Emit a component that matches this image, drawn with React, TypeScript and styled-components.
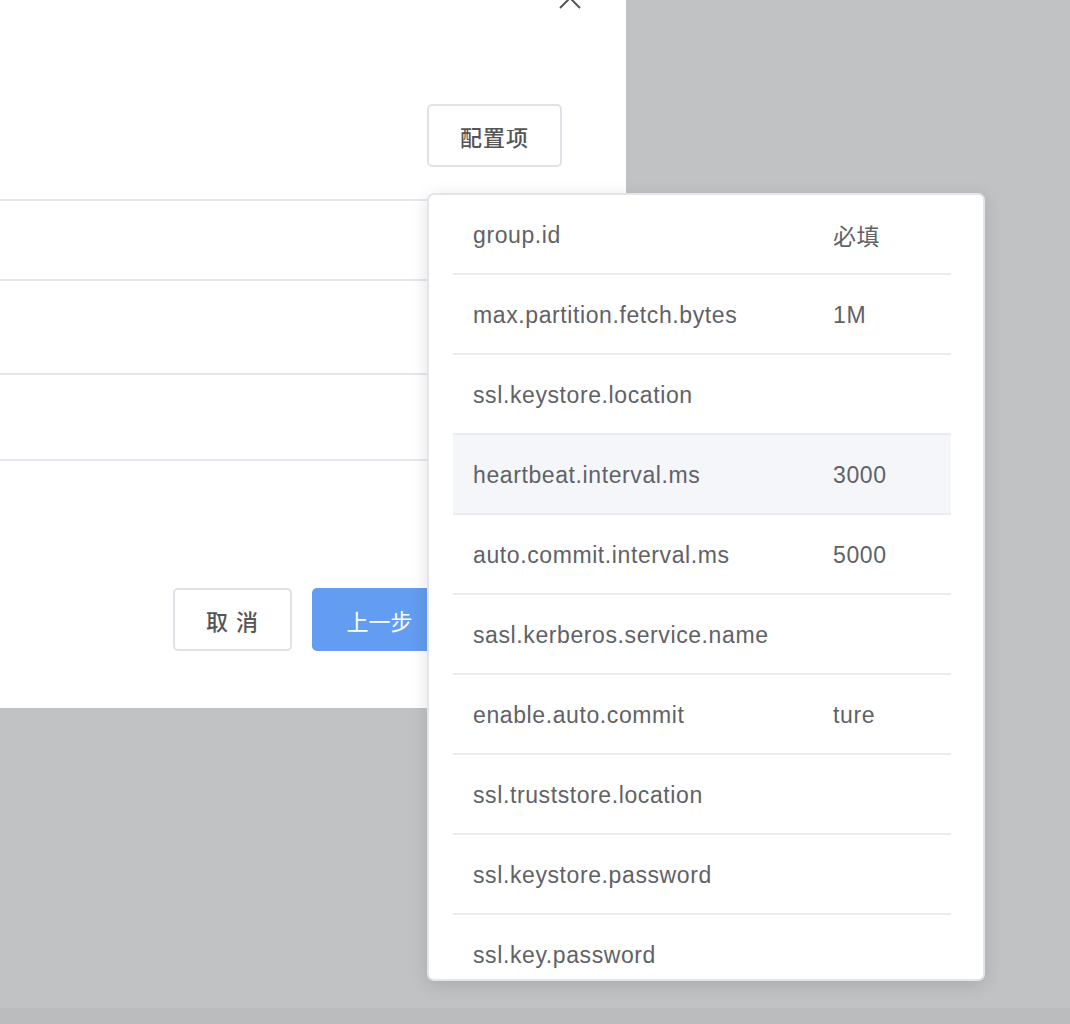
import React from "react";
import styled, { createGlobalStyle } from "styled-components";

const Global = createGlobalStyle`
  html, body { margin: 0; padding: 0; }
  body {
    background: #c1c2c4;
    font-family: "Helvetica Neue", "Liberation Sans", "Noto Sans CJK SC", sans-serif;
    overflow: hidden;
  }
`;

const rows: [string, string][] = [
  ["group.id", "必填"],
  ["max.partition.fetch.bytes", "1M"],
  ["ssl.keystore.location", ""],
  ["heartbeat.interval.ms", "3000"],
  ["auto.commit.interval.ms", "5000"],
  ["sasl.kerberos.service.name", ""],
  ["enable.auto.commit", "ture"],
  ["ssl.truststore.location", ""],
  ["ssl.keystore.password", ""],
  ["ssl.key.password", ""],
];

const App: React.FC = () => (
  <Page>
    <Global />
    <Modal>
      <Close>
        <svg width="24" height="24" viewBox="0 0 24 24" fill="none" stroke="#555" strokeWidth="2">
          <path d="M2 2 L22 22 M22 2 L2 22" />
        </svg>
      </Close>
      <Toolbar>
        <GhostButton>配置项</GhostButton>
      </Toolbar>
      <FieldLine $h={80} />
      <FieldLine $h={94} />
      <FieldLine $h={86} />
      <Footer>
        <GhostButton $wide>取 消</GhostButton>
        <PrimaryButton>上一步</PrimaryButton>
      </Footer>
    </Modal>
    <Bottom />
    <Popover>
      <Table>
        {rows.map(([k, v], i) => (
          <Row key={k} $active={i === 3}>
            <Key>{k}</Key>
            <Val>{v}</Val>
          </Row>
        ))}
      </Table>
    </Popover>
  </Page>
);

const Page = styled.div`
  position: relative;
  width: 1070px;
  height: 1024px;
`;

const Modal = styled.div`
  width: 626px;
  height: 708px;
  background: #fff;
  position: relative;
  box-sizing: border-box;
`;

const Close = styled.div`
  position: absolute;
  left: 558px;
  top: -14px;
`;

const Toolbar = styled.div`
  display: flex;
  justify-content: flex-end;
  align-items: flex-start;
  padding: 104px 64px 0 0;
  height: 201px;
  box-sizing: border-box;
  border-bottom: 2px solid #e6e7ee;
`;

const FieldLine = styled.div<{ $h: number }>`
  height: ${(p) => p.$h - 2}px;
  border-bottom: 2px solid #e6e7ee;
`;

const GhostButton = styled.button<{ $wide?: boolean }>`
  width: ${(p) => (p.$wide ? 119 : 135)}px;
  height: 63px;
  border: 2px solid #e1e2e8;
  border-radius: 5px;
  background: #fff;
  color: #555;
  font-size: 22px;
  font-weight: 500;
  font-family: inherit;
  letter-spacing: 1px;
`;

const PrimaryButton = styled.button`
  width: 135px;
  height: 63px;
  border: none;
  border-radius: 5px;
  background: #639df1;
  color: #fff;
  font-size: 22px;
  font-family: inherit;
`;

const Footer = styled.div`
  display: flex;
  gap: 20px;
  padding: 127px 0 0 173px;
`;

const Bottom = styled.div`
  position: absolute;
  left: 0;
  right: 0;
  top: 1008px;
  bottom: 0;
  background: #bbbcbe;
`;

const Popover = styled.div`
  position: absolute;
  left: 427px;
  top: 193px;
  width: 558px;
  height: 788px;
  box-sizing: border-box;
  background: #fff;
  border: 2px solid #e4e5ea;
  border-radius: 7px;
  box-shadow: 0 4px 18px rgba(0, 0, 0, 0.12);
  overflow: hidden;
  padding: 0 32px 0 24px;
`;

const Table = styled.div`
  display: flex;
  flex-direction: column;
`;

const Row = styled.div<{ $active: boolean }>`
  display: flex;
  align-items: center;
  height: 80px;
  flex-shrink: 0;
  box-sizing: border-box;
  border-bottom: 2px solid #ebecf0;
  background: ${(p) => (p.$active ? "#f5f6fa" : "#fff")};
  padding-left: 20px;
  padding-top: 2px;
  font-size: 23px;
  letter-spacing: 0.6px;
  color: #606266;
`;

const Key = styled.span`
  width: 360px;
`;

const Val = styled.span``;

export default App;
